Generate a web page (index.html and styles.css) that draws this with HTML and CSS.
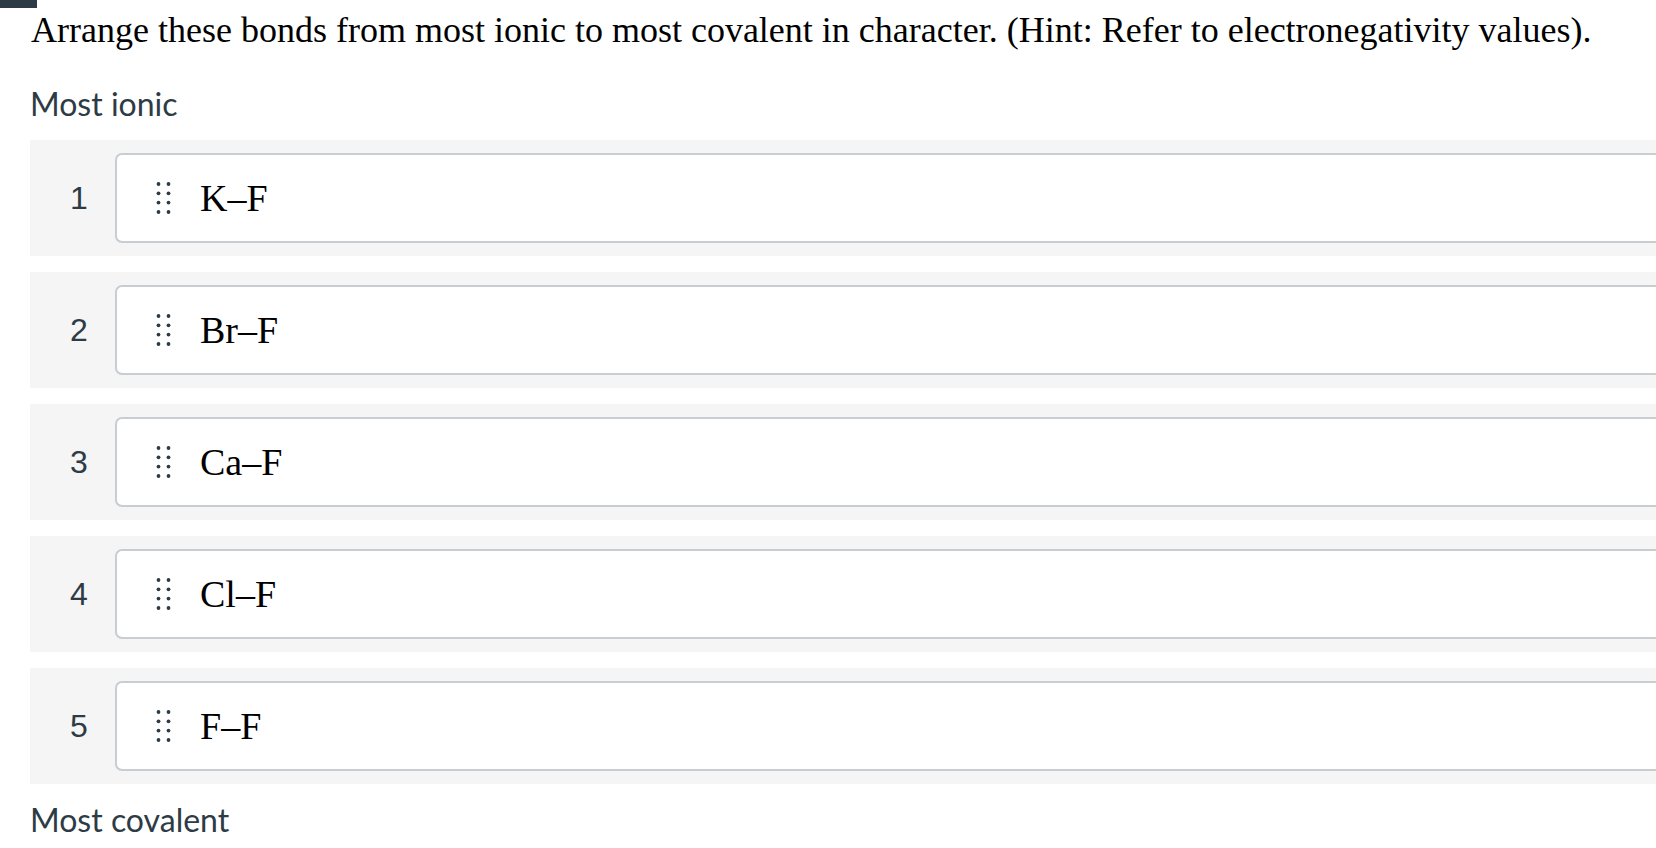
FILE: index.html
```html
<!DOCTYPE html>
<html>
<head>
<meta charset="utf-8">
<link rel="stylesheet" href="styles.css">
</head>
<body>
<div class="page">
  <div class="topbar"></div>
  <p class="question">Arrange these bonds from most ionic to most covalent in character. (Hint: Refer to electronegativity values).</p>
  <div class="label label-top">Most ionic</div>
  <ol class="list">
    <li class="row"><span class="num">1</span><div class="box"><svg class="handle" width="15" height="32" viewBox="0 0 15 32"><g fill="#2d3b45"><circle cx="2.5" cy="2" r="1.9"/><circle cx="12.5" cy="2" r="1.9"/><circle cx="2.5" cy="11.3" r="1.9"/><circle cx="12.5" cy="11.3" r="1.9"/><circle cx="2.5" cy="20.6" r="1.9"/><circle cx="12.5" cy="20.6" r="1.9"/><circle cx="2.5" cy="30" r="1.9"/><circle cx="12.5" cy="30" r="1.9"/></g></svg><span class="item">K–F</span></div></li>
    <li class="row"><span class="num">2</span><div class="box"><svg class="handle" width="15" height="32" viewBox="0 0 15 32"><g fill="#2d3b45"><circle cx="2.5" cy="2" r="1.9"/><circle cx="12.5" cy="2" r="1.9"/><circle cx="2.5" cy="11.3" r="1.9"/><circle cx="12.5" cy="11.3" r="1.9"/><circle cx="2.5" cy="20.6" r="1.9"/><circle cx="12.5" cy="20.6" r="1.9"/><circle cx="2.5" cy="30" r="1.9"/><circle cx="12.5" cy="30" r="1.9"/></g></svg><span class="item">Br–F</span></div></li>
    <li class="row"><span class="num">3</span><div class="box"><svg class="handle" width="15" height="32" viewBox="0 0 15 32"><g fill="#2d3b45"><circle cx="2.5" cy="2" r="1.9"/><circle cx="12.5" cy="2" r="1.9"/><circle cx="2.5" cy="11.3" r="1.9"/><circle cx="12.5" cy="11.3" r="1.9"/><circle cx="2.5" cy="20.6" r="1.9"/><circle cx="12.5" cy="20.6" r="1.9"/><circle cx="2.5" cy="30" r="1.9"/><circle cx="12.5" cy="30" r="1.9"/></g></svg><span class="item">Ca–F</span></div></li>
    <li class="row"><span class="num">4</span><div class="box"><svg class="handle" width="15" height="32" viewBox="0 0 15 32"><g fill="#2d3b45"><circle cx="2.5" cy="2" r="1.9"/><circle cx="12.5" cy="2" r="1.9"/><circle cx="2.5" cy="11.3" r="1.9"/><circle cx="12.5" cy="11.3" r="1.9"/><circle cx="2.5" cy="20.6" r="1.9"/><circle cx="12.5" cy="20.6" r="1.9"/><circle cx="2.5" cy="30" r="1.9"/><circle cx="12.5" cy="30" r="1.9"/></g></svg><span class="item">Cl–F</span></div></li>
    <li class="row"><span class="num">5</span><div class="box"><svg class="handle" width="15" height="32" viewBox="0 0 15 32"><g fill="#2d3b45"><circle cx="2.5" cy="2" r="1.9"/><circle cx="12.5" cy="2" r="1.9"/><circle cx="2.5" cy="11.3" r="1.9"/><circle cx="12.5" cy="11.3" r="1.9"/><circle cx="2.5" cy="20.6" r="1.9"/><circle cx="12.5" cy="20.6" r="1.9"/><circle cx="2.5" cy="30" r="1.9"/><circle cx="12.5" cy="30" r="1.9"/></g></svg><span class="item">F–F</span></div></li>
  </ol>
  <div class="label label-bottom">Most covalent</div>
</div>
</body>
</html>
```
FILE: styles.css
```css
html, body {
  margin: 0;
  padding: 0;
  background: #ffffff;
  overflow: hidden;
}
.page {
  width: 1656px;
  height: 848px;
  overflow: hidden;
}
.topbar {
  width: 37px;
  height: 8px;
  background: #2d3b45;
}
.question {
  margin: 0;
  padding-left: 31px;
  font-family: "Liberation Serif", "Times New Roman", serif;
  font-size: 36px;
  line-height: 44px;
  color: #000;
  white-space: nowrap;
}
.label {
  font-family: Lato, "Noto Sans", sans-serif;
  font-size: 32px;
  color: #2d3b45;
  padding-left: 30px;
  line-height: 40px;
}
.label-top {
  margin-top: 32px;
}
.list {
  list-style: none;
  margin: 16px 0 0 30px;
  padding: 0;
  display: flex;
  flex-direction: column;
  gap: 16px;
  width: 1700px;
}
.row {
  background: #f5f5f5;
  display: flex;
  align-items: center;
  padding: 13px 0;
  height: 116px;
  box-sizing: border-box;
}
.num {
  width: 85px;
  padding-left: 13px;
  box-sizing: border-box;
  text-align: center;
  font-family: "Liberation Sans", Arial, sans-serif;
  font-size: 32px;
  color: #2d3b45;
}
.box {
  flex: 1;
  height: 90px;
  box-sizing: border-box;
  background: #fff;
  border: 2px solid #c7cdd1;
  border-radius: 7px;
  display: flex;
  align-items: center;
  padding-left: 39px;
}
.handle {
  display: block;
  flex: none;
}
.item {
  margin-left: 29px;
  font-family: "Liberation Serif", "Times New Roman", serif;
  font-size: 38px;
  color: #000;
}
.label-bottom {
  margin-top: 16px;
}
```
